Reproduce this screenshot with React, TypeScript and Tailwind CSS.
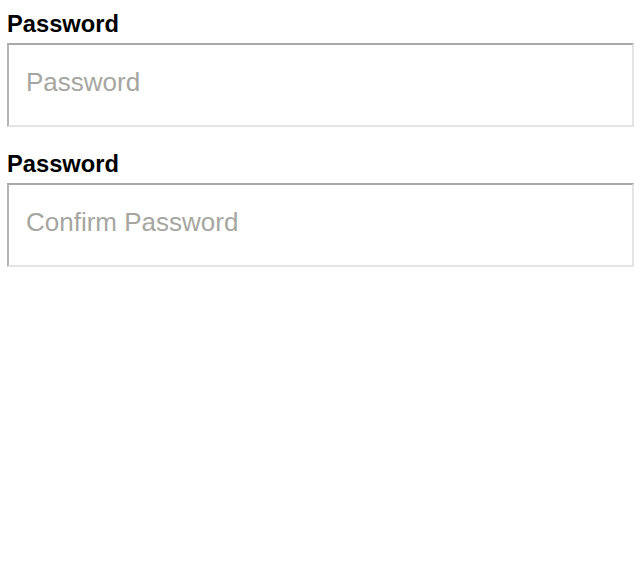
export default function App() {
  return (
    <div
      className="w-[640px] h-[576px] bg-white pl-[7px] pr-[6px] pt-[9px]"
      style={{ fontFamily: '"Liberation Sans", Arial, sans-serif' }}
    >
      <Field label="Password" placeholder="Password" />
      <div className="h-[22px]" />
      <Field label="Password" placeholder="Confirm Password" />
    </div>
  );
}

function Field({ label, placeholder }: { label: string; placeholder: string }) {
  return (
    <div>
      <label className="block text-[23.7px] leading-[30px] font-bold text-black mb-[4px]">
        {label}
      </label>
      <input
        type="password"
        placeholder={placeholder}
        className="block w-full h-[84px] bg-white border-2 border-t-[#a8a8a8] border-l-[#b4b4b4] border-r-[#e4e4e4] border-b-[#e4e4e4] pl-[17px] pb-[6px] text-[26px] text-black placeholder:text-[#a6a6a0] outline-none"
      />
    </div>
  );
}
